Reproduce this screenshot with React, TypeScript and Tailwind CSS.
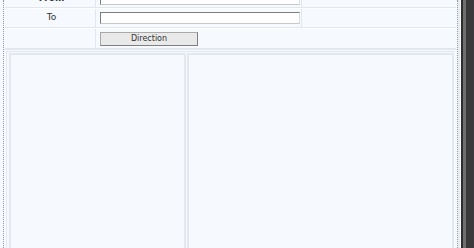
export default function App() {
  return (
    <div className="w-[474px] h-[248px] overflow-hidden bg-[#f6f9fd] flex font-['DejaVu_Sans',sans-serif] text-[#333]">
      <div className="flex-1 flex pl-[3px] pr-px">
        <div className="flex-1 flex flex-col border-l border-r border-dotted border-[#8f969e]">
          <div className="flex flex-col mt-[-10px] pl-[1px] pr-[1px]">
            {/* Row 1 */}
            <div className="grid grid-cols-[91px_205px_1fr] h-[18px] border-b border-[#e2e7ee]">
              <div className="border-r border-[#e2e7ee] flex items-center justify-center text-[9px] font-bold pl-[3px]">From</div>
              <div className="flex items-center pl-[4px] pr-px">
                <div className="w-full h-[13px] bg-white border-t border-l border-[#7d7d7d] border-b border-b-[#c9c9c9] border-r border-r-[#dcdcdc]" />
              </div>
              <div className="border-l border-[#e2e7ee]" />
            </div>
            {/* Row 2 */}
            <div className="grid grid-cols-[91px_205px_1fr] h-[20px] border-b border-[#e2e7ee] border-t border-t-white">
              <div className="border-r border-[#e2e7ee] flex items-center justify-center text-[9px] pl-[3px]">To</div>
              <div className="flex items-center pl-[4px] pr-px">
                <div className="w-full h-[12px] bg-white border-t border-l border-[#7d7d7d] border-b border-b-[#c9c9c9] border-r border-r-[#dcdcdc]" />
              </div>
              <div className="border-l border-[#e2e7ee]" />
            </div>
            {/* Row 3 */}
            <div className="grid grid-cols-[91px_1fr] h-[21px] border-b border-[#e2e7ee] border-t border-t-white">
              <div className="border-r border-[#e2e7ee]" />
              <div className="flex items-center pl-[4px]">
                <div className="w-[98px] h-[14px] bg-[#e9e9e9] border border-[#a9a9a9] border-b-[#7f7f7f] border-r-[#7f7f7f] flex items-center justify-center text-[8px] leading-none">
                  Direction
                </div>
              </div>
            </div>
          </div>
          {/* Panels */}
          <div className="flex-1 border-t border-[#e5e9ef] pt-px flex flex-col">
            <div className="flex-1 border-t border-l border-[#e3e8ee] ml-[2px] mr-[2px] flex gap-[1px] pl-[2px] pr-[1px] pt-px">
              <div className="w-[177px] border-t-2 border-l-2 border-r-2 border-[#e4e8ee] bg-[#f6f9fd]" />
              <div className="flex-1 border-t-2 border-l-2 border-r-2 border-[#e4e8ee] bg-[#f6f9fd]" />
            </div>
          </div>
        </div>
        <div className="w-[2px] bg-[#e8ebef]" />
      </div>
      <div className="w-[13px] flex">
        <div className="w-[2px] bg-[#2e2e2e]" />
        <div className="w-[3px] bg-[#6f6f6f]" />
        <div className="flex-1 bg-[#3a3a3a]" />
      </div>
    </div>
  );
}
